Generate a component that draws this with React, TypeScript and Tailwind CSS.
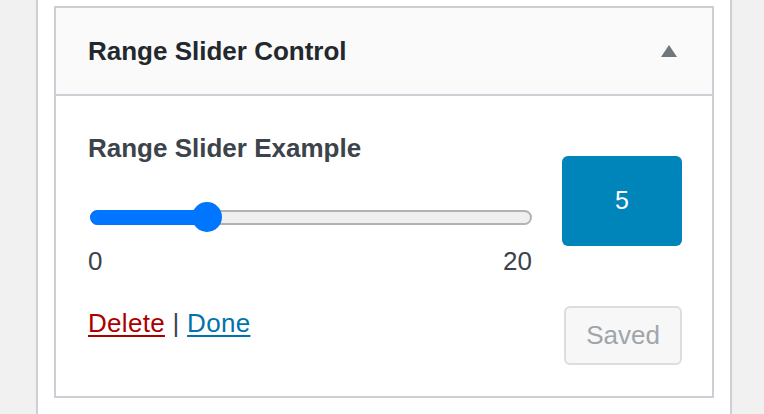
const FONT = "font-['Liberation_Sans',Arial,sans-serif]";

function RangeSlider({ value, min, max }: { value: number; min: number; max: number }) {
  const pct = (value - min) / (max - min);
  // thumb is 30px wide, so its centre travels inside the track minus the thumb
  const left = `calc(${pct} * (100% - 30px))`;
  return (
    <div className="relative h-[30px] w-full">
      <div className="absolute left-[2px] right-0 top-[8px] h-[15px] rounded-full border-2 border-[#b2b2b2] bg-[#efefef]" />
      <div
        className="absolute left-[2px] top-[8px] h-[15px] rounded-l-full bg-[#0075ff]"
        style={{ width: `calc(${pct} * (100% - 30px) + 15px)` }}
      />
      <div className="absolute top-0 h-[30px] w-[30px] rounded-full bg-[#0075ff]" style={{ left }} />
    </div>
  );
}

export default function App() {
  return (
    <div className={`flex h-[414px] w-[764px] bg-[#f1f1f1] pl-[36px] ${FONT}`}>
      <div className="h-full w-[696px] border-x-2 border-[#ccd0d4] bg-white px-[16px] pt-[6px]">
        <div className="h-[392px] border-2 border-[#ccd0d4]">
          {/* header */}
          <div className="flex h-[88px] items-center justify-between border-b-2 border-[#ccd0d4] bg-[#fafafa] pl-[32px] pr-[35px]">
            <h3 className="text-[26px] font-bold text-[#23282d]">Range Slider Control</h3>
            <svg width="16" height="12" viewBox="0 0 16 12">
              <polygon points="8,0 16,12 0,12" fill="#72777c" />
            </svg>
          </div>

          {/* body */}
          <div className="flex gap-[30px] pl-[32px] pr-[30px] pt-[37px]">
            <div className="flex w-[444px] flex-col">
              <label className="text-[26px] font-bold leading-[30px] text-[#3c434a]">Range Slider Example</label>
              <div className="mt-[39px]">
                <RangeSlider value={5} min={0} max={20} />
              </div>
              <div className="mt-[14px] flex justify-between text-[26px] leading-[30px] text-[#3c434a]">
                <span>0</span>
                <span>20</span>
              </div>
              <div className="mt-[32px] text-[26px] leading-[30px] tracking-[0.3px] text-[#3c434a]">
                <a className="text-[#a00] underline underline-offset-[3px]" href="#">
                  Delete
                </a>{" "}
                |{" "}
                <a className="text-[#0073aa] underline underline-offset-[3px]" href="#">
                  Done
                </a>
              </div>
            </div>

            <div className="flex w-[120px] flex-col">
              <div className="mt-[23px] flex h-[90px] items-center justify-center rounded-[6px] bg-[#0085ba] text-[25px] text-white">
                5
              </div>
              <button className="ml-[2px] mt-[60px] h-[59px] rounded-[6px] border-2 border-[#dddddd] bg-[#f7f7f7] text-[26px] text-[#a0a5aa]">
                Saved
              </button>
            </div>
          </div>
        </div>
      </div>
    </div>
  );
}
